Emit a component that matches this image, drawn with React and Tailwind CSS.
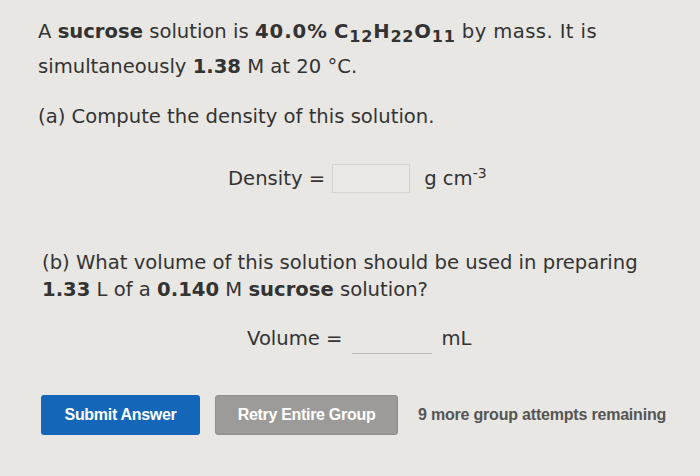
import React from 'react';

function Sub({ children }) {
  return <sub className="text-[16px] relative top-[4px] align-baseline">{children}</sub>;
}

export default function App() {
  return (
    <div className="w-[700px] h-[476px] bg-[#e9e7e3] text-[#333] font-['DejaVu_Sans',sans-serif] text-[19.6px] overflow-hidden">
      <div className="pl-[38px] pt-[14px]">
        <p className="leading-[35px]">
          A <b>sucrose</b> solution is <b className="tracking-[1px]">40.0%</b>{' '}
          <b className="tracking-[0.8px]">
            C<Sub>12</Sub>H<Sub>22</Sub>O<Sub>11</Sub>
          </b>{' '}
          <span className="tracking-[0.4px]">by mass. It is</span>
          <br />
          simultaneously <b>1.38</b> M at 20 °C.
        </p>

        <p className="mt-[19px] leading-[27px]">(a) Compute the density of this solution.</p>

        <div className="flex items-center mt-[34px] pl-[190px]">
          <span>Density =</span>
          <div className="ml-[7px] w-[78px] h-[29px] border border-[#d6d4d0] bg-[#ebe9e6]" />
          <span className="ml-[14px]">
            g cm<sup className="text-[14px]">-3</sup>
          </span>
        </div>

        <p className="mt-[56px] leading-[27px] pl-[4px]">
          (b) What volume of this solution should be used in preparing
          <br />
          <b>1.33</b> L of a <b>0.140</b> M <b>sucrose</b> solution?
        </p>

        <div className="flex items-end mt-[21px] pl-[209px]">
          <span>Volume =</span>
          <div className="ml-[9px] w-[80px] h-[26px] border-b border-[#bdbbb7]" />
          <span className="ml-[10px]">mL</span>
        </div>

        <div className="flex items-center mt-[41px] pl-[3px] font-['Liberation_Sans',sans-serif] font-bold">
          <button className="w-[159px] h-[40px] rounded-[3px] bg-[#1466b8] text-white text-[16px] tracking-[-0.3px]">
            Submit Answer
          </button>
          <button className="ml-[15px] w-[183px] h-[40px] rounded-[3px] bg-[#9c9b99] border border-[#8f8e8c] text-white text-[16px] tracking-[-0.3px]">
            Retry Entire Group
          </button>
          <span className="ml-[20px] text-[16px] text-[#555] tracking-[-0.2px]">9 more group attempts remaining</span>
        </div>
      </div>
    </div>
  );
}
